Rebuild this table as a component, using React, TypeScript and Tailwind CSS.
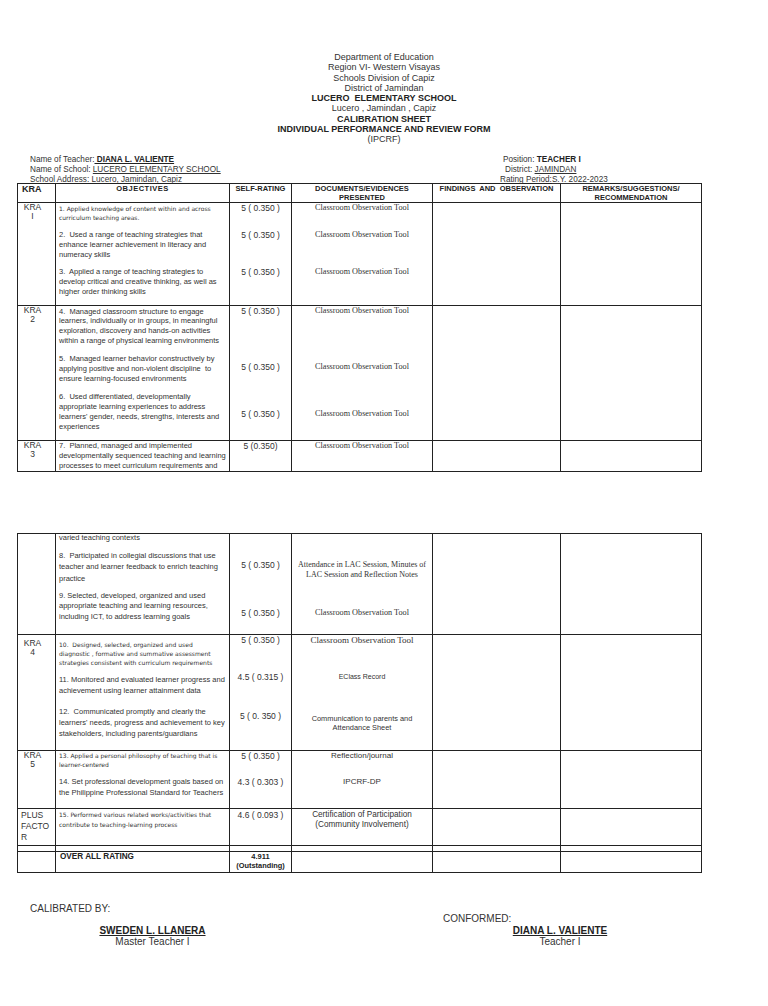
import React from "react";

const sans = "font-['Liberation_Sans',Arial,sans-serif]";
const small = "font-['DejaVu_Sans',sans-serif] text-[6px] leading-[9px]";
const serif = "font-['Liberation_Serif','Times_New_Roman',serif]";
const cols = "grid grid-cols-[174px_62px_141px_128px_141px]";
const cell = "border-r border-[#222]";

type Item = {
  h: string;
  obj: string[];
  oc: string;
  rating: string;
  rc: string;
  doc: string[];
  dc: string;
};

type Group = { kra: string[]; kc: string; items: Item[] };

const cot = ["Classroom Observation Tool"];
const cotCls = serif + " text-[8.2px] leading-[10px]";

const page1: Group[] = [
  {
    kra: ["KRA", "I"],
    kc: "pt-0",
    items: [
      {
        h: "h-[25px]",
        obj: ["1. Applied knowledge of content within and across", "curriculum teaching areas."],
        oc: small + " pt-[1px]",
        rating: "5 ( 0.350 )",
        rc: "pt-0",
        doc: cot,
        dc: cotCls + " pt-0",
      },
      {
        h: "h-[38px]",
        obj: [
          "2.  Used a range of teaching strategies that",
          "enhance learner achievement in literacy and",
          "numeracy skills",
        ],
        oc: "text-[7.5px] leading-[10px] pt-[2px]",
        rating: "5 ( 0.350 )",
        rc: "pt-[2px]",
        doc: cot,
        dc: cotCls + " pt-[2px]",
      },
      {
        h: "h-[39px]",
        obj: [
          "3.  Applied a range of teaching strategies to",
          "develop critical and creative thinking, as well as",
          "higher order thinking skills",
        ],
        oc: "text-[7.5px] leading-[10px] pt-[1px]",
        rating: "5 ( 0.350 )",
        rc: "pt-[1px]",
        doc: cot,
        dc: cotCls + " pt-[1px]",
      },
    ],
  },
  {
    kra: ["KRA", "2"],
    kc: "pt-0",
    items: [
      {
        h: "h-[41px]",
        obj: [
          "4.  Managed classroom structure to engage",
          "learners, individually or in groups, in meaningful",
          "exploration, discovery and hands-on activities",
          "within a range of physical learning environments",
        ],
        oc: "text-[7.5px] leading-[9.7px] pt-[1px]",
        rating: "5 ( 0.350 )",
        rc: "pt-0",
        doc: cot,
        dc: cotCls + " pt-0",
      },
      {
        h: "h-[39px]",
        obj: [
          "5.  Managed learner behavior constructively by",
          "applying positive and non-violent discipline  to",
          "ensure learning-focused environments",
        ],
        oc: "text-[7.5px] leading-[10px] pt-[7px]",
        rating: "5 ( 0.350 )",
        rc: "pt-[15px]",
        doc: cot,
        dc: cotCls + " pt-[15px]",
      },
      {
        h: "h-[54px]",
        obj: [
          "6.  Used differentiated, developmentally",
          "appropriate learning experiences to address",
          "learners' gender, needs, strengths, interests and",
          "experiences",
        ],
        oc: "text-[7.5px] leading-[10px] pt-[6px]",
        rating: "5 ( 0.350 )",
        rc: "pt-[23px]",
        doc: cot,
        dc: cotCls + " pt-[23px]",
      },
    ],
  },
  {
    kra: ["KRA", "3"],
    kc: "pt-0",
    items: [
      {
        h: "h-[30px]",
        obj: [
          "7.  Planned, managed and implemented",
          "developmentally sequenced teaching and learning",
          "processes to meet curriculum requirements and",
        ],
        oc: "text-[7.5px] leading-[10px] pt-0",
        rating: "5 (0.350)",
        rc: "pt-0",
        doc: cot,
        dc: cotCls + " pt-0",
      },
    ],
  },
];

const page2: Group[] = [
  {
    kra: [],
    kc: "pt-0",
    items: [
      {
        h: "h-[14px]",
        obj: ["varied teaching contexts"],
        oc: "text-[7.5px] leading-[8px] pt-0",
        rating: "",
        rc: "",
        doc: [],
        dc: "",
      },
      {
        h: "h-[40px]",
        obj: [
          "8.  Participated in collegial discussions that use",
          "teacher and learner feedback to enrich teaching",
          "practice",
        ],
        oc: "text-[7.5px] leading-[11.5px] pt-[2px]",
        rating: "5 ( 0.350 )",
        rc: "pt-[12px]",
        doc: ["Attendance in LAC Session, Minutes of", "LAC Session and Reflection Notes"],
        dc: serif + " text-[8px] leading-[10px] pt-[12px]",
      },
      {
        h: "h-[46px]",
        obj: [
          "9. Selected, developed, organized and used",
          "appropriate teaching and learning resources,",
          "including ICT, to address learning goals",
        ],
        oc: "text-[7.5px] leading-[10.5px] pt-[3px]",
        rating: "5 ( 0.350 )",
        rc: "pt-[20px]",
        doc: cot,
        dc: cotCls + " pt-[20px]",
      },
    ],
  },
  {
    kra: ["KRA", "4"],
    kc: "pt-[4px]",
    items: [
      {
        h: "h-[35px]",
        obj: [
          "10.  Designed, selected, organized and used",
          "diagnostic , formative and summative assessment",
          "strategies consistent with curriculum requirements",
        ],
        oc: small + " pt-[5px]",
        rating: "5 ( 0.350 )",
        rc: "pt-0",
        doc: cot,
        dc: serif + " text-[9px] leading-[11px] pt-0",
      },
      {
        h: "h-[33px]",
        obj: ["11. Monitored and evaluated learner progress and", "achievement using learner attainment data"],
        oc: "text-[7.5px] leading-[11px] pt-[4px]",
        rating: "4.5 ( 0.315 )",
        rc: "pt-[2px]",
        doc: ["EClass Record"],
        dc: "text-[7px] leading-[10px] pt-[2px]",
      },
      {
        h: "h-[47px]",
        obj: [
          "12.  Communicated promptly and clearly the",
          "learners' needs, progress and achievement to key",
          "stakeholders, including parents/guardians",
        ],
        oc: "text-[7.5px] leading-[11px] pt-[3px]",
        rating: "5 ( 0. 350 )",
        rc: "pt-[8px]",
        doc: ["Communication to parents and", "Attendance Sheet"],
        dc: "text-[7.4px] leading-[9px] pt-[11px]",
      },
    ],
  },
  {
    kra: ["KRA", "5"],
    kc: "pt-0",
    items: [
      {
        h: "h-[21px]",
        obj: ["13. Applied a personal philosophy of teaching that is", "learner-centered"],
        oc: small + " pt-0",
        rating: "5 ( 0.350 )",
        rc: "pt-0",
        doc: ["Reflection/journal"],
        dc: "text-[8px] leading-[10px] pt-0",
      },
      {
        h: "h-[36px]",
        obj: ["14. Set professional development goals based on", "the Philippine Professional Standard for Teachers"],
        oc: "text-[7.5px] leading-[11px] pt-[4px]",
        rating: "4.3 ( 0.303 )",
        rc: "pt-[5px]",
        doc: ["IPCRF-DP"],
        dc: "text-[8px] leading-[10px] pt-[5px]",
      },
    ],
  },
  {
    kra: ["PLUS", "FACTO", "R"],
    kc: "pt-[1px] leading-[11px]",
    items: [
      {
        h: "h-[36px]",
        obj: ["15. Performed various related works/activities that", "contribute to teaching-learning process"],
        oc: small + " leading-[10px] pt-[1px]",
        rating: "4.6 ( 0.093 )",
        rc: "pt-[1px]",
        doc: ["Certification of Participation", "(Community Involvement)"],
        dc: "text-[8.2px] leading-[10px] pt-[1px]",
      },
    ],
  },
];

function Lines({ lines }: { lines: string[] }) {
  return (
    <>
      {lines.map((l, i) => (
        <div key={i} className="whitespace-pre">
          {l}
        </div>
      ))}
    </>
  );
}

function GroupRows({ g }: { g: Group }) {
  const plus = g.kra.length === 3;
  return (
    <div className="flex border-t border-[#222]">
      <div
        className={
          "w-[38px] shrink-0 text-[8.5px] " +
          cell +
          " " +
          g.kc +
          (plus ? " pl-[3px] text-left" : " pr-[8px] text-center leading-[9.5px]")
        }
      >
        <Lines lines={g.kra} />
      </div>
      <div className="flex flex-col">
        {g.items.map((it, i) => (
          <div key={i} className={cols + " " + it.h}>
            <div className={cell + " pl-[3px] " + it.oc}>
              <Lines lines={it.obj} />
            </div>
            <div className={cell + " text-center text-[8.5px] leading-[10px] " + it.rc}>{it.rating}</div>
            <div className={cell + " text-center " + it.dc}>
              <Lines lines={it.doc} />
            </div>
            <div className={cell} />
            <div className={cell} />
          </div>
        ))}
      </div>
    </div>
  );
}

export default function App() {
  return (
    <div className={"w-[768px] h-[1006px] bg-white text-[#333] " + sans}>
      <div className="pt-[52px] text-center text-[9px] leading-[10.3px]">
        <div>Department of Education</div>
        <div>Region VI- Western Visayas</div>
        <div>Schools Division of Capiz</div>
        <div>District of Jamindan</div>
        <div className="font-bold text-[#222]">LUCERO&nbsp; ELEMENTARY SCHOOL</div>
        <div>Lucero , Jamindan , Capiz</div>
        <div className="font-bold text-[#222]">CALIBRATION SHEET</div>
        <div className="font-bold text-[#222]">INDIVIDUAL PERFORMANCE AND REVIEW FORM</div>
        <div>(IPCRF)</div>
      </div>

      <div className="mt-[10px] flex h-[28px] text-[8.2px] leading-[10px]">
        <div className="w-[500px] pl-[30px]">
          <div>
            Name of Teacher:<span className="font-bold text-[#222] underline"> DIANA L. VALIENTE</span>
          </div>
          <div>
            Name of School: <span className="underline">LUCERO ELEMENTARY SCHOOL</span>
          </div>
          <div>School Address: Lucero, Jamindan, Capiz</div>
        </div>
        <div>
          <div className="pl-[3px]">
            Position: <span className="font-bold text-[#222]">TEACHER I</span>
          </div>
          <div className="pl-[5px]">
            District: <span className="underline">JAMINDAN</span>
          </div>
          <div>
            Rating Period:<span className="underline">S.Y. 2022-2023</span>
          </div>
        </div>
      </div>

      {/* page 1 */}
      <div className="ml-[17px] w-[685px] border-l border-b border-[#222]">
        <div className="flex h-[19px] border-t border-[#222] font-bold text-[#222]">
          <div className={"w-[38px] shrink-0 pl-[4px] pt-[1px] text-[9px] leading-[9px] " + cell}>KRA</div>
          <div className={cols + " text-center text-[7.5px] leading-[9.5px]"}>
            <div className={cell + " tracking-[0.5px]"}>OBJECTIVES</div>
            <div className={cell}>SELF-RATING</div>
            <div className={cell}>
              DOCUMENTS/EVIDENCES
              <br />
              PRESENTED
            </div>
            <div className={cell + " whitespace-pre"}>FINDINGS  AND  OBSERVATION</div>
            <div className={cell}>
              REMARKS/SUGGESTIONS/
              <br />
              RECOMMENDATION
            </div>
          </div>
        </div>
        {page1.map((g, i) => (
          <GroupRows key={i} g={g} />
        ))}
      </div>

      {/* page 2 */}
      <div className="mt-[61px] ml-[17px] w-[685px] border-l border-b border-[#222]">
        {page2.map((g, i) => (
          <GroupRows key={i} g={g} />
        ))}
        <div className="flex h-[6px] border-t border-[#222]">
          <div className={"w-[38px] shrink-0 " + cell} />
          <div className={cols}>
            <div className={cell} />
            <div className={cell} />
            <div className={cell} />
            <div className={cell} />
            <div className={cell} />
          </div>
        </div>
        <div className="flex h-[21px] border-t border-[#222] font-bold text-[#222]">
          <div className={"w-[38px] shrink-0 " + cell} />
          <div className={cols}>
            <div className={cell + " pl-[4px] text-[8.2px] leading-[10px]"}>OVER ALL RATING</div>
            <div className={cell + " text-center"}>
              <div className="text-[7.5px] leading-[10px]">4.911</div>
              <div className="text-[7.4px] leading-[8px]">(Outstanding)</div>
            </div>
            <div className={cell} />
            <div className={cell} />
            <div className={cell} />
          </div>
        </div>
      </div>

      {/* signatures */}
      <div className="mt-[30px] pl-[30px] text-[10px] leading-[12px]">CALIBRATED BY:</div>
      <div className="flex text-[10px]">
        <div className="w-[305px] pt-[10px] text-center leading-[11px]">
          <div className="font-bold text-[#222] underline">SWEDEN L. LLANERA</div>
          <div>Master Teacher I</div>
        </div>
        <div className="ml-[138px] -mt-[2px] w-[234px] leading-[12px]">
          <div>CONFORMED:</div>
          <div className="text-center leading-[11px]">
            <div className="font-bold text-[#222] underline">DIANA L. VALIENTE</div>
            <div>Teacher I</div>
          </div>
        </div>
      </div>
    </div>
  );
}
